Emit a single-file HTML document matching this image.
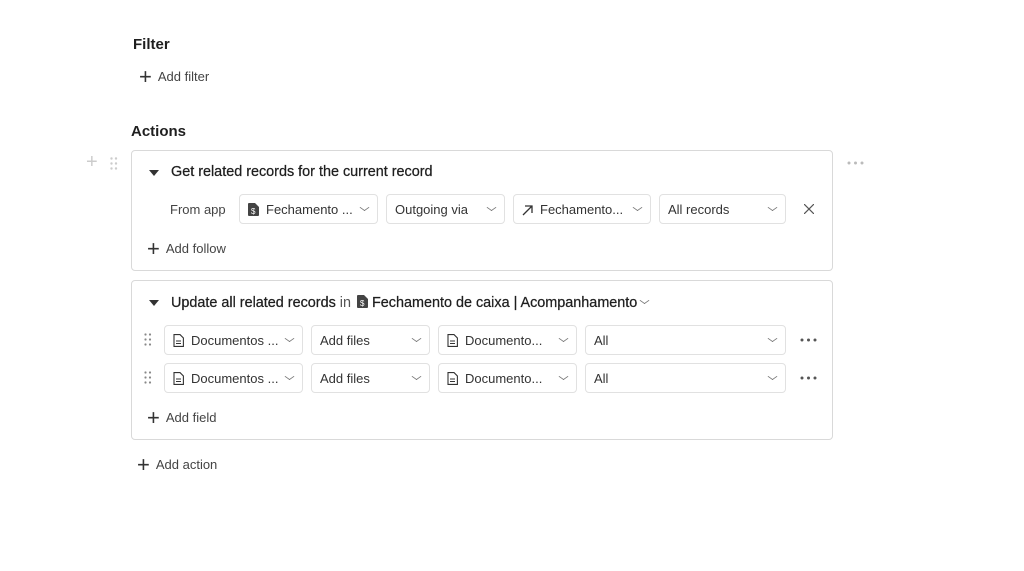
<!DOCTYPE html>
<html><head><style>
*{box-sizing:border-box;margin:0;padding:0}
body{width:1024px;height:571px;background:#fff;font-family:"Liberation Sans",sans-serif;color:#222;position:relative;overflow:hidden;font-size:13px}
.a{position:absolute;white-space:nowrap}
.h{font-weight:bold;font-size:15px;color:#1f1f1f}
.card{position:absolute;left:131px;width:702px;border:1px solid #d9d9d9;border-radius:4px}
.sel{position:absolute;height:30px;border:1px solid #e1e1e1;border-radius:4px;display:flex;align-items:center;padding-left:8px;font-size:13px;color:#333}
.sel .c{position:absolute;right:9px;top:9px;width:7px;height:7px;border-right:1px solid #777;border-bottom:1px solid #777;transform:scale(1,.7) rotate(45deg)}
.ico{display:inline-block;width:11px;height:13px;margin-right:7px;vertical-align:middle}
.plus{font-size:22px;font-weight:300;color:#333;margin-right:6px;vertical-align:-3px}
.add{font-size:13px;color:#444}
.tri{position:absolute;width:0;height:0;border-left:5px solid transparent;border-right:5px solid transparent;border-top:6px solid #333}
.t{font-size:14.4px;color:#1f1f1f;-webkit-text-stroke:0.25px #1f1f1f}
</style></head><body>
<div class="a h" style="left:133px;top:36px">Filter</div>
<div class="a add" style="left:139px;top:64px"><span class="plus">+</span>Add filter</div>
<div class="a h" style="left:131px;top:123px">Actions</div>
<div class="a" style="left:86px;top:151px;color:#ccc;font-size:20px;font-weight:300">+</div>
<svg class="a" style="left:110px;top:157px" width="8" height="13"><g fill="#ccc"><circle cx="1.5" cy="1.5" r="1.2"/><circle cx="6" cy="1.5" r="1.2"/><circle cx="1.5" cy="6.5" r="1.2"/><circle cx="6" cy="6.5" r="1.2"/><circle cx="1.5" cy="11.5" r="1.2"/><circle cx="6" cy="11.5" r="1.2"/></g></svg>
<svg class="a" style="left:847px;top:161px" width="17" height="4"><g fill="#bbb"><circle cx="2" cy="2" r="1.5"/><circle cx="8.5" cy="2" r="1.5"/><circle cx="15" cy="2" r="1.5"/></g></svg>

<div class="card" style="top:150px;height:121px">
  <div class="tri" style="left:17px;top:19px"></div>
  <div class="a t" style="left:39px;top:13px">Get related records for the current record</div>
  <div class="a" style="left:38px;top:51px;color:#444">From app</div>
  <div class="sel" style="left:107px;top:43px;width:139px"><svg class="ico" viewBox="0 0 11 13"><path d="M0 1q0-1 1-1h6l4 4v8q0 1-1 1H1q-1 0-1-1z" fill="#444"/><text x="3" y="11" font-size="8" fill="#fff" font-family="Liberation Sans">$</text></svg>Fechamento ...<span class="c"></span></div>
  <div class="sel" style="left:254px;top:43px;width:119px">Outgoing via<span class="c"></span></div>
  <div class="sel" style="left:381px;top:43px;width:138px"><svg class="ico" viewBox="0 0 11 13"><path d="M1 12L10 3M3 3h7v7" stroke="#333" stroke-width="1.3" fill="none"/></svg>Fechamento...<span class="c"></span></div>
  <div class="sel" style="left:527px;top:43px;width:127px">All records<span class="c"></span></div>
  <svg class="a" style="left:672px;top:53px" width="10" height="10"><path d="M0 0L10 10M10 0L0 10" stroke="#555" stroke-width="1.2"/></svg>
  <div class="a add" style="left:15px;top:85px"><span class="plus">+</span>Add follow</div>
</div>

<div class="card" style="top:280px;height:160px">
  <div class="tri" style="left:17px;top:19px"></div>
  <div class="a t" style="left:39px;top:14px">Update all related records <span style="color:#555;-webkit-text-stroke:0">in</span> <svg class="ico" style="margin:0 4px 0 2px;vertical-align:-1px" viewBox="0 0 11 13"><path d="M0 1q0-1 1-1h6l4 4v8q0 1-1 1H1q-1 0-1-1z" fill="#444"/><text x="3" y="11" font-size="8" fill="#fff" font-family="Liberation Sans">$</text></svg>Fechamento de caixa | Acompanhamento <span style="display:inline-block;width:7px;height:7px;border-right:1px solid #777;border-bottom:1px solid #777;transform:scale(1,.7) rotate(45deg);vertical-align:3px;margin-left:0;-webkit-text-stroke:0"></span></div>
  <svg class="a" style="left:12px;top:52px" width="8" height="13"><g fill="#888"><circle cx="1.5" cy="1.5" r="1.1"/><circle cx="6" cy="1.5" r="1.1"/><circle cx="1.5" cy="6.5" r="1.1"/><circle cx="6" cy="6.5" r="1.1"/><circle cx="1.5" cy="11.5" r="1.1"/><circle cx="6" cy="11.5" r="1.1"/></g></svg>
  <div class="sel" style="left:32px;top:44px;width:139px"><svg class="ico" viewBox="0 0 11 13"><path d="M1 .6h6l3.4 3.4v8.4H1z M3 7h5M3 9.5h5" stroke="#333" stroke-width="1.1" fill="none"/></svg>Documentos ...<span class="c"></span></div>
  <div class="sel" style="left:179px;top:44px;width:119px">Add files<span class="c"></span></div>
  <div class="sel" style="left:306px;top:44px;width:139px"><svg class="ico" viewBox="0 0 11 13"><path d="M1 .6h6l3.4 3.4v8.4H1z M3 7h5M3 9.5h5" stroke="#333" stroke-width="1.1" fill="none"/></svg>Documento...<span class="c"></span></div>
  <div class="sel" style="left:453px;top:44px;width:201px">All<span class="c"></span></div>
  <svg class="a" style="left:668px;top:57px" width="17" height="4"><g fill="#555"><circle cx="2" cy="2" r="1.5"/><circle cx="8.5" cy="2" r="1.5"/><circle cx="15" cy="2" r="1.5"/></g></svg>

  <svg class="a" style="left:12px;top:90px" width="8" height="13"><g fill="#888"><circle cx="1.5" cy="1.5" r="1.1"/><circle cx="6" cy="1.5" r="1.1"/><circle cx="1.5" cy="6.5" r="1.1"/><circle cx="6" cy="6.5" r="1.1"/><circle cx="1.5" cy="11.5" r="1.1"/><circle cx="6" cy="11.5" r="1.1"/></g></svg>
  <div class="sel" style="left:32px;top:82px;width:139px"><svg class="ico" viewBox="0 0 11 13"><path d="M1 .6h6l3.4 3.4v8.4H1z M3 7h5M3 9.5h5" stroke="#333" stroke-width="1.1" fill="none"/></svg>Documentos ...<span class="c"></span></div>
  <div class="sel" style="left:179px;top:82px;width:119px">Add files<span class="c"></span></div>
  <div class="sel" style="left:306px;top:82px;width:139px"><svg class="ico" viewBox="0 0 11 13"><path d="M1 .6h6l3.4 3.4v8.4H1z M3 7h5M3 9.5h5" stroke="#333" stroke-width="1.1" fill="none"/></svg>Documento...<span class="c"></span></div>
  <div class="sel" style="left:453px;top:82px;width:201px">All<span class="c"></span></div>
  <svg class="a" style="left:668px;top:95px" width="17" height="4"><g fill="#555"><circle cx="2" cy="2" r="1.5"/><circle cx="8.5" cy="2" r="1.5"/><circle cx="15" cy="2" r="1.5"/></g></svg>

  <div class="a add" style="left:15px;top:124px"><span class="plus">+</span>Add field</div>
</div>

<div class="a add" style="left:137px;top:452px"><span class="plus">+</span>Add action</div>
</body></html>
